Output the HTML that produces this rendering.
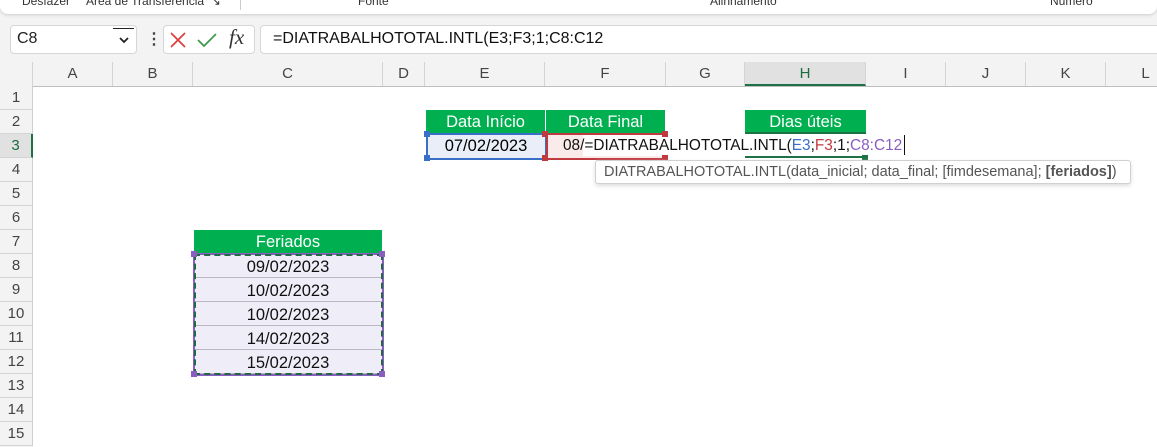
<html><head><style>
body{margin:0;width:1157px;height:436px;background:#f3f3f3;font-family:"Liberation Sans",sans-serif;position:relative;overflow:hidden}
.a{position:absolute}
.ch{position:absolute;top:62px;height:24px;line-height:24px;text-align:center;font-size:15px;color:#444;border-right:1px solid #d4d4d4;box-sizing:border-box}
.rh{position:absolute;left:0;width:33px;height:24px;line-height:24px;text-align:center;font-size:15px;color:#444;border-bottom:1px solid #d4d4d4;box-sizing:border-box;background:#f3f3f3;border-right:1px solid #cfcfcf}
.g{position:absolute;background:#00b050;color:#fff;text-align:center;font-size:16.5px;height:23px;line-height:25px}
.d{position:absolute;left:194px;width:188px;height:23px;line-height:26px;text-align:center;font-size:16.5px;color:#111;background:#efedf7;border-bottom:1px solid #b9b6c6}
.h{position:absolute;width:6px;height:6px}
</style></head><body>
<div class="a" style="left:0;top:0;width:1157px;height:14px;background:#fff;border-radius:0 0 8px 8px;box-shadow:0 1px 3px #ccc"></div>
<div class="a" style="left:22px;top:-6px;font-size:12px;color:#333">Desfazer</div>
<div class="a" style="left:86px;top:-6px;font-size:12px;color:#333">Área de Transferência&nbsp;&nbsp;↘</div>
<div class="a" style="left:240px;top:0;width:1px;height:10px;background:#ccc"></div>
<div class="a" style="left:358px;top:-6px;font-size:12px;color:#333">Fonte</div>
<div class="a" style="left:710px;top:-6px;font-size:12px;color:#333">Alinhamento</div>
<div class="a" style="left:1050px;top:-6px;font-size:12px;color:#333">Número</div>
<div class="a" style="left:10px;top:25px;width:125px;height:27px;background:#fff;border:1px solid #d6d6d6;border-radius:4px"></div>
<div class="a" style="left:17px;top:30px;font-size:16px;color:#222">C8</div>
<svg class="a" style="left:118px;top:36px" width="12" height="8"><path d="M2 2L6 6L10 2" stroke="#222" stroke-width="1.8" fill="none"/></svg>
<div class="a" style="left:113px;top:28px;width:21px;height:1px;background:#222"></div>
<div class="a" style="left:146px;top:29px;font-size:16px;color:#444;font-weight:bold">⋮</div>
<div class="a" style="left:163px;top:25px;width:90px;height:27px;background:#fff;border:1px solid #d6d6d6;border-radius:4px"></div>
<svg class="a" style="left:168px;top:30px" width="60" height="20"><path d="M3 3L17 17M17 3L3 17" stroke="#e03c3c" stroke-width="1.7"/><path d="M30 10L36 16L48 4" stroke="#3a9a4a" stroke-width="1.7" fill="none"/></svg>
<div class="a" style="left:229px;top:25px;font-size:21px;font-style:italic;font-family:'Liberation Serif',serif;color:#333">fx</div>
<div class="a" style="left:260px;top:25px;width:910px;height:27px;background:#fff;border:1px solid #d6d6d6;border-radius:4px"></div>
<div class="a" style="left:273px;top:30px;font-size:16px;color:#111">=DIATRABALHOTOTAL.INTL(E3;F3;1;C8:C12</div>
<div class="a" style="left:0;top:62px;width:1157px;height:24px;background:#f3f3f3;border-bottom:1px solid #bdbdbd"></div>
<div class="ch" style="left:0;width:33px"></div>
<div class="ch" style="left:33px;width:80px">A</div><div class="ch" style="left:113px;width:80px">B</div>
<div class="ch" style="left:193px;width:190px">C</div><div class="ch" style="left:383px;width:42px">D</div>
<div class="ch" style="left:425px;width:120px">E</div><div class="ch" style="left:545px;width:121px">F</div>
<div class="ch" style="left:666px;width:79px">G</div>
<div class="ch" style="left:745px;width:121px;background:#e1e1e1;color:#1e6b40;border-bottom:2px solid #1e7145">H</div>
<div class="ch" style="left:866px;width:80px">I</div><div class="ch" style="left:946px;width:80px">J</div>
<div class="ch" style="left:1026px;width:80px">K</div><div class="ch" style="left:1106px;width:80px">L</div>
<div class="a" style="left:33px;top:87px;width:1124px;height:360px;background:#fff"></div>
<div class="rh" style="top:86px">1</div><div class="rh" style="top:110px">2</div>
<div class="rh" style="top:134px;background:#e1e1e1;color:#1e6b40;border-right:2px solid #1e7145">3</div>
<div class="rh" style="top:158px">4</div><div class="rh" style="top:182px">5</div><div class="rh" style="top:206px">6</div>
<div class="rh" style="top:230px">7</div><div class="rh" style="top:254px">8</div><div class="rh" style="top:278px">9</div>
<div class="rh" style="top:302px">10</div><div class="rh" style="top:326px">11</div><div class="rh" style="top:350px">12</div>
<div class="rh" style="top:374px">13</div><div class="rh" style="top:398px">14</div><div class="rh" style="top:422px">15</div>
<div class="g" style="left:426px;top:110px;width:119px">Data Início</div>
<div class="g" style="left:546px;top:110px;width:119px">Data Final</div>
<div class="g" style="left:745px;top:110px;width:121px">Dias úteis</div>
<div class="a" style="left:426px;top:133px;width:117px;height:23px;background:#eaeef8;border:2px solid #3a6fc8"></div>
<div class="a" style="left:426px;top:137px;width:120px;text-align:center;font-size:16.5px">07/02/2023</div>
<div class="a" style="left:546px;top:133px;width:117px;height:23px;background:#fbeaea;border:2px solid #c0393f"></div>
<div class="a" style="left:583px;top:135px;width:322px;height:21px;background:#fff"></div>
<div class="a" style="left:745px;top:132px;width:121px;height:2px;background:#1e7145"></div>
<div class="a" style="left:745px;top:156px;width:121px;height:2px;background:#1e7145"></div>
<div class="a" style="left:563px;top:137px;font-size:15.4px;color:#111;white-space:nowrap">08/=DIATRABALHOTOTAL.INTL(<span style="color:#3a6fc8">E3</span>;<span style="color:#c0393f">F3</span>;1;<span style="color:#8a5ec0">C8:C12</span></div>
<div class="a" style="left:904px;top:135px;width:1px;height:20px;background:#111"></div>
<div class="h" style="left:424px;top:131px;background:#3a6fc8"></div><div class="h" style="left:424px;top:155px;background:#3a6fc8"></div>
<div class="h" style="left:542px;top:131px;background:#c0393f"></div><div class="h" style="left:542px;top:155px;background:#c0393f"></div>
<div class="h" style="left:662px;top:131px;background:#c0393f"></div><div class="h" style="left:662px;top:155px;background:#c0393f"></div>
<div class="h" style="left:862px;top:155px;background:#1e7145"></div>
<div class="a" style="left:595px;top:160px;width:536px;height:24px;background:#fff;border:1px solid #d0d0d0;border-radius:3px;box-shadow:0 2px 4px #ddd;font-size:14.5px;color:#555;line-height:23px;padding-left:8px;box-sizing:border-box;white-space:nowrap">DIATRABALHOTOTAL.INTL(data_inicial; data_final; [fimdesemana]; <b>[feriados]</b>)</div>
<div class="g" style="left:194px;top:230px;width:188px">Feriados</div>
<div class="d" style="top:254px">09/02/2023</div><div class="d" style="top:278px">10/02/2023</div>
<div class="d" style="top:302px">10/02/2023</div><div class="d" style="top:326px">14/02/2023</div>
<div class="d" style="top:350px">15/02/2023</div>
<div class="a" style="left:193px;top:253px;width:187px;height:119px;border:2px solid #8a5ec0"></div>
<div class="a" style="left:194px;top:254px;width:185px;height:117px;border:2px dashed #1e6b40"></div>
<div class="h" style="left:191px;top:251px;background:#8a5ec0"></div><div class="h" style="left:379px;top:251px;background:#8a5ec0"></div>
<div class="h" style="left:191px;top:371px;background:#8a5ec0"></div><div class="h" style="left:379px;top:371px;background:#8a5ec0"></div>
</body></html>
